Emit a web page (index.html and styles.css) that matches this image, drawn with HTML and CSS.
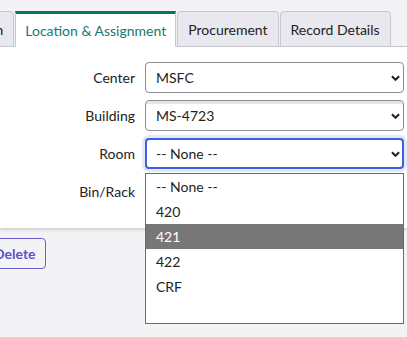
FILE: index.html
```html
<!DOCTYPE html>
<html lang="en">
<head>
  <meta charset="UTF-8" />
  <meta name="viewport" content="width=device-width, initial-scale=1.0"/>
  <title>Asset - Location &amp; Assignment</title>
  <link rel="stylesheet" href="styles.css">
</head>
<body>

  <!-- tab strip, scrolled so the first tab is mostly off screen -->
  <nav class="tabs">
    <a href="#" class="tab">Description</a>
    <a href="#" class="tab active">Location &amp; Assignment</a>
    <a href="#" class="tab">Procurement</a>
    <a href="#" class="tab">Record Details</a>
  </nav>

  <div class="panel">
    <div class="form-row">
      <label class="form-label" for="center">Center</label>
      <div class="select-wrap">
        <select id="center" class="field">
          <option>MSFC</option>
        </select>
        <svg class="chevron" viewBox="0 0 10 6"><path d="M1 1l4 4 4-4" /></svg>
      </div>
    </div>

    <div class="form-row">
      <label class="form-label" for="building">Building</label>
      <div class="select-wrap">
        <select id="building" class="field shaded">
          <option>MS-4723</option>
        </select>
        <svg class="chevron" viewBox="0 0 10 6"><path d="M1 1l4 4 4-4" /></svg>
      </div>
    </div>

    <div class="form-row">
      <label class="form-label" for="room">Room</label>
      <div class="select-wrap">
        <select id="room" class="field focused">
          <option>-- None --</option>
        </select>
        <svg class="chevron" viewBox="0 0 10 6"><path d="M1 1l4 4 4-4" /></svg>
      </div>
    </div>

    <div class="form-row">
      <label class="form-label" for="bin">Bin/Rack</label>
      <div class="select-wrap">
        <select id="bin" class="field">
          <option>-- None --</option>
        </select>
      </div>
    </div>
  </div>

  <div class="actions">
    <button class="btn-delete">Delete</button>
  </div>

  <!-- open list of the Room select -->
  <ul class="dropdown">
    <li>-- None --</li>
    <li>420</li>
    <li class="hover">421</li>
    <li>422</li>
    <li>CRF</li>
  </ul>

</body>
</html>
```

FILE: styles.css
```css
* { margin: 0; padding: 0; box-sizing: border-box; }

body {
  font-family: 'Lato', 'Liberation Sans', sans-serif;
  font-size: 14px;
  color: #222;
  background: #f3f3f6;
  min-height: 100vh;
  position: relative;
  overflow: hidden;
}

.tabs {
  display: flex;
  gap: 1px;
  padding-top: 11px;
  margin-left: -79px;
  border-bottom: 1px solid #c6c6ce;
  position: relative;
  z-index: 2;
}

.tab {
  height: 36px;
  margin-bottom: -1px;
  padding: 0 10px;
  display: flex;
  align-items: center;
  color: #222;
  text-decoration: none;
  background: #e8e8ee;
  border: 1px solid #c6c6ce;
  border-radius: 4px 4px 0 0;
  white-space: nowrap;
}

.tab.active {
  background: #fff;
  color: #147a72;
  border-top: 3px solid #05775a;
  border-bottom-color: #fff;
  border-radius: 0;
  padding: 1px 9px 0;
}

.panel {
  background: #fff;
  padding: 15px 3px 21px 0;
  box-shadow: 0 2px 3px rgba(0, 0, 0, 0.15);
  position: relative;
  z-index: 1;
}

.form-row {
  display: flex;
  align-items: center;
  gap: 10px;
  margin-bottom: 7px;
}

.form-row:last-child { margin-bottom: 0; }

.form-label {
  width: 135px;
  text-align: right;
}

.select-wrap {
  flex: 1;
  position: relative;
}

.field {
  appearance: none;
  -webkit-appearance: none;
  width: 100%;
  height: 31px;
  padding: 0 10px;
  font-family: inherit;
  font-size: 14px;
  color: #222;
  background: #fff;
  border: 1px solid #8d8d95;
  border-radius: 4px;
  outline: none;
}

.field.shaded {
  box-shadow: inset 0 3px 0 #e6e6ea;
}

.field.focused {
  border: 2px solid #3f5ee0;
  padding-left: 9px;
  box-shadow: 0 0 0 3px #e4e8fb;
}

.chevron {
  position: absolute;
  right: 4px;
  top: 13px;
  width: 9px;
  height: 6px;
  fill: none;
  stroke: #222;
  stroke-width: 2.2;
  pointer-events: none;
}

.actions {
  padding-top: 10px;
  margin-left: -16px;
}

.btn-delete {
  height: 31px;
  padding: 0 9px;
  font-family: inherit;
  font-size: 14px;
  font-weight: 700;
  color: #5b50cc;
  background: transparent;
  border: 1px solid #6a60d2;
  border-radius: 4px;
  cursor: pointer;
}

.dropdown {
  position: absolute;
  top: 173px;
  left: 145px;
  width: 259px;
  height: 151px;
  list-style: none;
  background: #fff;
  border: 1px solid #6b6b6b;
  z-index: 5;
}

.dropdown li {
  height: 25px;
  line-height: 25px;
  padding-left: 10px;
}

.dropdown li.hover {
  background: #777;
  color: #fff;
}
```
